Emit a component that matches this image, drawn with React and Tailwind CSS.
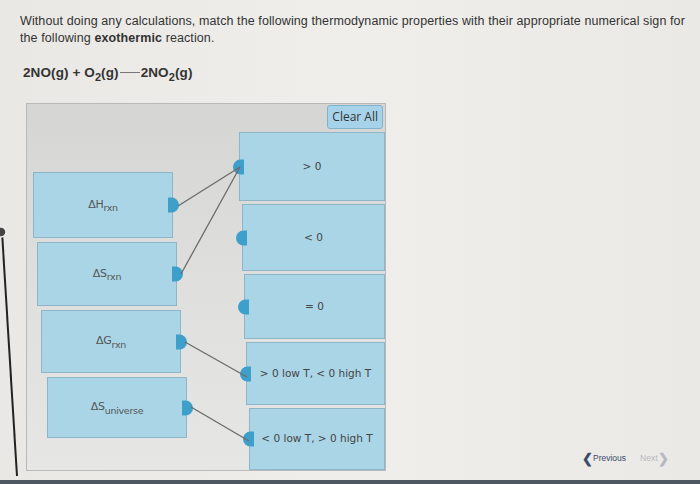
import React from "react";

const leftItems = [
  { main: "H", sub: "rxn", ml: "ml-[6px]", h: "h-[66px]" },
  { main: "S", sub: "rxn", ml: "ml-[10px]", h: "h-[64px]" },
  { main: "G", sub: "rxn", ml: "ml-[14px]", h: "h-[63px]" },
  { main: "S", sub: "universe", ml: "ml-[20px]", h: "h-[61px]" },
];

const rightItems = [
  { t: "> 0", ml: "ml-[0px]", h: "h-[69px]" },
  { t: "< 0", ml: "ml-[3px]", h: "h-[67px]" },
  { t: "= 0", ml: "ml-[5px]", h: "h-[65px]" },
  { t: "> 0 low T, < 0 high T", ml: "ml-[7px]", h: "h-[63px]" },
  { t: "< 0 low T, > 0 high T", ml: "ml-[10px]", h: "h-[62px]" },
];

function Dot({ side }) {
  return (
    <span
      className={
        "absolute top-1/2 -translate-y-1/2 w-[11px] h-[15px] bg-[#3e9fcb] " +
        (side === "right"
          ? "right-[-7px] rounded-r-full"
          : "left-[-7px] rounded-l-full")
      }
    />
  );
}

export default function App() {
  return (
    <div
      className="relative w-[700px] h-[484px] overflow-hidden bg-gradient-to-r from-[#e9e8e4] via-[#efeeeb] to-[#ebe9e5] text-[#333]"
      style={{ fontFamily: '"Liberation Sans", Arial, sans-serif' }}
    >
      <div className="pl-[20px] pt-[13px] text-[12.5px] leading-[17px] text-[#333] tracking-[0.1px]">
        <p className="whitespace-nowrap">
          Without doing any calculations, match the following thermodynamic properties with their appropriate numerical sign for
        </p>
        <p>
          the following <b>exothermic</b> reaction.
        </p>
        <p className="mt-[17px] ml-[3px] font-bold text-[13.5px] flex items-center">
          <span>
            2NO(g) + O<sub className="text-[11px] align-[-1px]">2</sub>(g)
          </span>
          <span className="inline-block w-[20px] h-px bg-[#777] mx-[1px]" />
          <span>
            2NO<sub className="text-[11px] align-[-1px]">2</sub>(g)
          </span>
        </p>
      </div>

      {/* panel */}
      <div className="absolute left-[26px] top-[103px] w-[360px] h-[368px] border border-[#b9b9b9] bg-gradient-to-b from-[#d5d5d3] via-[#dfdfdd] to-[#e6e6e4] flex">
        {/* left column */}
        <div className="w-[152px] pt-[68px] flex flex-col gap-[4px]">
          {leftItems.map((it, i) => (
            <div
              key={i}
              className={
                "relative w-[140px] border border-[#8fb5c8] bg-[#aad5e7] flex items-center justify-center text-[11px] text-[#555] " +
                it.ml +
                " " +
                it.h
              }
              style={{ fontFamily: '"DejaVu Sans", sans-serif' }}
            >
              <span className="tracking-[-0.3px]">
                Δ{it.main}
                <sub className="text-[9.5px] align-[-1px]">{it.sub}</sub>
              </span>
              <Dot side="right" />
            </div>
          ))}
        </div>

        <div className="flex-1" />

        {/* right column */}
        <div className="w-[146px] flex flex-col items-end">
          <button className="mt-[1px] mr-[2px] h-[24px] px-[4px] rounded-[3px] border border-[#7fb3cc] bg-[#a6d3e9] text-[12px] text-[#333]" style={{ fontFamily: '"Open Sans", sans-serif' }}>
            Clear All
          </button>
          <div className="mt-[3px] flex flex-col gap-[3px] w-full">
            {rightItems.map((it, i) => (
              <div
                key={i}
                className={
                  "relative border border-[#8fb5c8] bg-[#aad5e7] flex items-center justify-center text-[10.5px] text-[#444] " +
                  it.ml +
                  " " +
                  it.h
                }
                style={{ fontFamily: '"DejaVu Sans", sans-serif' }}
              >
                <span>{it.t}</span>
                <Dot side="left" />
              </div>
            ))}
          </div>
        </div>

        {/* connection lines */}
        <svg
          className="absolute left-0 top-0 pointer-events-none"
          width="360"
          height="368"
          viewBox="0 0 360 368"
        >
          <g stroke="#6b6b6b" strokeWidth="1.3">
            <line x1="151" y1="102" x2="213" y2="63" />
            <line x1="154" y1="170" x2="213" y2="63" />
            <line x1="158" y1="238" x2="220" y2="273" />
            <line x1="164" y1="303" x2="222" y2="337" />
          </g>
        </svg>
      </div>

      {/* monitor bezel edge */}
      <svg className="absolute left-0 top-0 pointer-events-none" width="40" height="484">
        <line x1="2" y1="232" x2="17" y2="476" stroke="#222" strokeWidth="2" />
        <circle cx="1" cy="232" r="5" fill="#444" stroke="#eee" strokeWidth="1.5" />
      </svg>

      {/* nav */}
      <div className="absolute left-[582px] top-[452px] flex items-center gap-[14px] text-[8.5px]">
        <span className="flex items-center text-[#3b4a6b]">
          <span className="text-[13px] font-bold leading-none">❮</span>
          <span>Previous</span>
        </span>
        <span className="flex items-center text-[#b8b8c4]">
          <span>Next</span>
          <span className="text-[13px] font-bold leading-none">❯</span>
        </span>
      </div>

      {/* bottom dark bezel */}
      <div className="absolute left-0 bottom-0 w-full h-[4px] bg-[#4d5862]" />
    </div>
  );
}
